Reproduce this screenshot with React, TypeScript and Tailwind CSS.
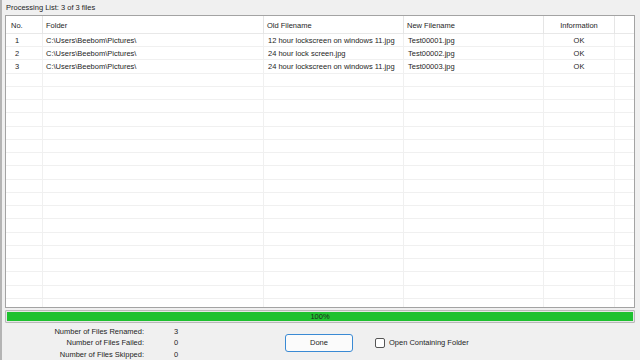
import * as React from "react";

const rows = [
  { no: "1", folder: "C:\\Users\\Beebom\\Pictures\\", oldName: "12 hour lockscreen on windows 11.jpg", newName: "Test00001.jpg", info: "OK" },
  { no: "2", folder: "C:\\Users\\Beebom\\Pictures\\", oldName: "24 hour lock screen.jpg", newName: "Test00002.jpg", info: "OK" },
  { no: "3", folder: "C:\\Users\\Beebom\\Pictures\\", oldName: "24 hour lockscreen on windows 11.jpg", newName: "Test00003.jpg", info: "OK" },
];

const EMPTY_ROWS = 18;

const stats = [
  { label: "Number of Files Renamed:", value: "3" },
  { label: "Number of Files Failed:", value: "0" },
  { label: "Number of Files Skipped:", value: "0" },
];

function Cell({ children, className = "" }: { children?: React.ReactNode; className?: string }) {
  return (
    <div className={`border-r border-[#f0f0f0] whitespace-nowrap overflow-hidden ${className}`}>
      {children}
    </div>
  );
}

function Row({ r }: { r?: (typeof rows)[number] }) {
  return (
    <div className="grid grid-cols-[37px_221px_140px_140px_71px_1fr] h-[13.25px] leading-[13.5px] border-b border-[#f0f0f0]">
      <Cell className="pl-[9px]">{r?.no}</Cell>
      <Cell className="pl-[3px]">{r?.folder}</Cell>
      <Cell className="pl-[4px]">{r?.oldName}</Cell>
      <Cell className="pl-[4px]">{r?.newName}</Cell>
      <Cell className="text-center">{r?.info}</Cell>
      <div />
    </div>
  );
}

export default function App() {
  return (
    <div
      className="w-[640px] h-[360px] bg-[#f0f0f0] flex text-[7.5px] text-[#1e1e1e] overflow-hidden"
      style={{ fontFamily: '"Liberation Sans", Arial, sans-serif' }}
    >
      <div className="w-[2px] h-full bg-[#b4b4b4]" />
      <div className="flex-1 flex flex-col pl-[3px] pr-[5px]">
        <div className="h-[15px] pl-[1px] pt-[3px] leading-[9px]">Processing List: 3 of 3 files</div>

        {/* file list */}
        <div className="h-[296px] bg-white border border-[#a3a3a3] overflow-hidden">
          <div className="grid grid-cols-[37px_221px_140px_140px_71px_1fr] h-[18px] leading-[19px] border-b border-[#e8e8e8]">
            <div className="border-r border-[#e5e5e5] pl-[5px]">No.</div>
            <div className="border-r border-[#e5e5e5] pl-[3px]">Folder</div>
            <div className="border-r border-[#e5e5e5] pl-[3px]">Old Filename</div>
            <div className="border-r border-[#e5e5e5] pl-[3px]">New Filename</div>
            <div className="border-r border-[#e5e5e5] text-center">Information</div>
            <div />
          </div>
          {rows.map((r) => (
            <Row key={r.no} r={r} />
          ))}
          {Array.from({ length: EMPTY_ROWS }).map((_, i) => (
            <Row key={`e${i}`} />
          ))}
        </div>

        {/* progress */}
        <div className="mt-[2px] h-[13px] border border-[#b9b9b9] bg-[#e6e6e6] p-[1px] rounded-[1px]">
          <div className="h-full bg-[#1ec12f] flex items-center justify-center leading-none text-[7.5px] pt-[1px]">100%</div>
        </div>

        {/* footer */}
        <div className="flex items-start mt-[2px]">
          <div className="w-[280px] grid grid-cols-[139px_auto] gap-x-[30px] leading-[11.5px] pt-[1px]">
            {stats.map((s) => (
              <React.Fragment key={s.label}>
                <div className="text-right">{s.label}</div>
                <div>{s.value}</div>
              </React.Fragment>
            ))}
          </div>
          <button className="mt-[9px] w-[68px] h-[18px] border border-[#3a8ad4] rounded-[3px] bg-[#fbfbfb] text-[7.5px] leading-none">
            Done
          </button>
          <div className="ml-[22px] mt-[13px] flex items-center gap-[4px]">
            <div className="w-[10px] h-[10px] border border-[#555] rounded-[2px] bg-white" />
            <span className="leading-none">Open Containing Folder</span>
          </div>
        </div>
      </div>
    </div>
  );
}
